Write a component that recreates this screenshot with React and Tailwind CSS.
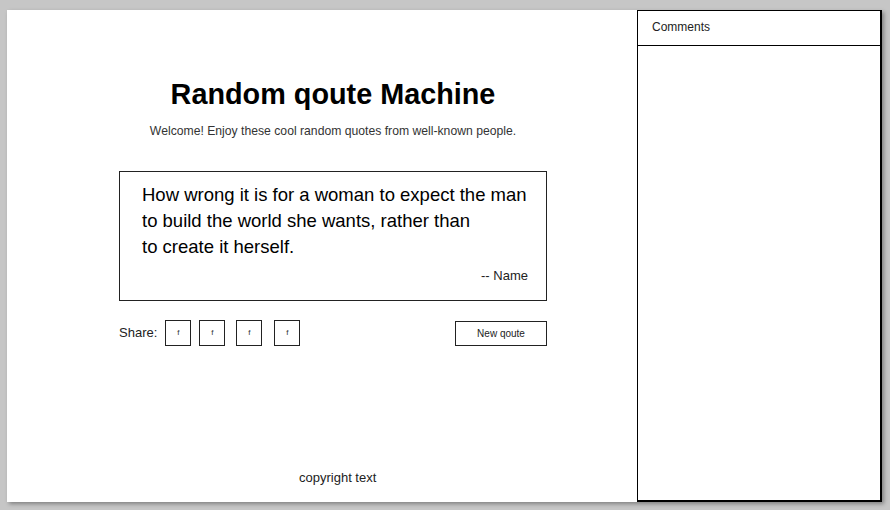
import React from 'react';

const quote = {
	lines: ['How wrong it is for a woman to expect the man', 'to build the world she wants, rather than', 'to create it herself.'],
	author: 'Name',
};

const ShareBox = ({className}) => (
	<button className={`w-[26px] h-[26px] border border-[#222] flex items-center justify-center text-[8px] text-[#333] ${className}`}>
		f
	</button>
);

const App = () => {
	return (
		<div className="w-[890px] h-[510px] bg-[#c6c6c6] pt-[10px] pl-[7px] font-['Liberation_Sans',Arial,sans-serif] text-[#111]">
			<div className="w-[875px] h-[492px] bg-white flex shadow-[2px_2px_4px_rgba(0,0,0,0.35)]">
				<div className="flex-1 flex flex-col">
					<div className="ml-[112px] w-[428px] flex flex-col">
						<h1 className="mt-[66px] text-[28.8px] leading-[36px] font-bold text-center text-black">Random qoute Machine</h1>
						<p className="mt-[12px] text-[12.2px] leading-[14px] text-center text-[#333] whitespace-nowrap">
							Welcome! Enjoy these cool random quotes from well-known people.
						</p>
						<div className="mt-[33px] h-[130px] border border-[#222] pl-[22px] pr-[18px] pt-[10px]">
							{quote.lines.map((line) => (
								<div key={line} className="text-[18.5px] leading-[26px] text-black">{line}</div>
							))}
							<div className="mt-[8px] text-right text-[13px] leading-[16px] text-[#222]">-- {quote.author}</div>
						</div>
						<div className="mt-[19px] flex items-center">
							<span className="text-[13px] text-[#222] mr-[8px]">Share:</span>
							<ShareBox />
							<ShareBox className="ml-[8px]" />
							<ShareBox className="ml-[11px]" />
							<ShareBox className="ml-[12px]" />
							<button className="ml-auto w-[92px] h-[25px] border border-[#222] text-[10px] text-[#222]">New qoute</button>
						</div>
					</div>
					<div className="mt-auto mb-[16px] ml-[292px] text-[13px] leading-[16px] text-[#222]">copyright text</div>
				</div>
				<div className="w-[245px] h-full border border-black border-r-2 border-b-2 flex flex-col">
					<div className="h-[35px] border-b border-black pl-[14px] flex items-center pb-[2px] text-[12px] text-[#222]">Comments</div>
					<div className="flex-1" />
				</div>
			</div>
		</div>
	);
};

export default App;
